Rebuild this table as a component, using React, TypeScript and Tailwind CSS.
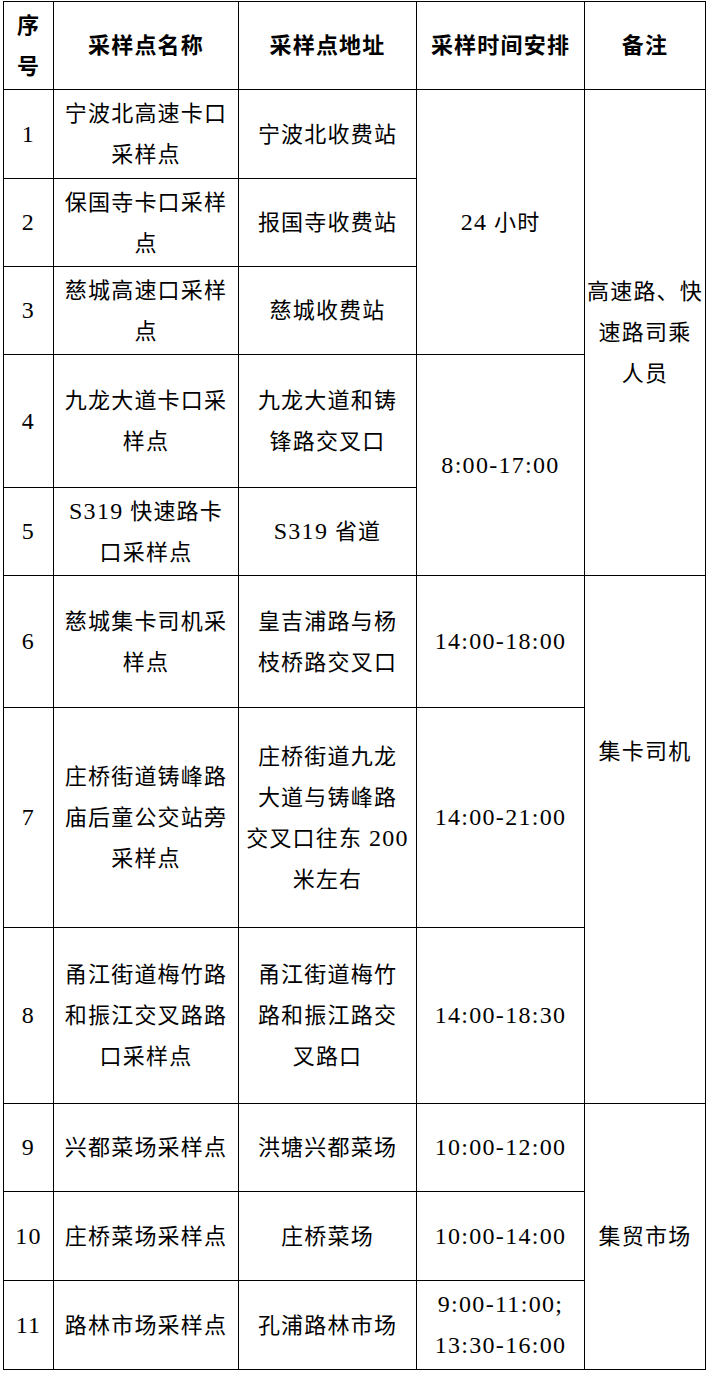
import React from "react";

type Cell = { lines: string[]; rowSpan?: number; top?: string };
type Row = { h: string; cells: Cell[] };

const rows: Row[] = [
  {
    h: "h-[89px]",
    cells: [
      { lines: ["1"] },
      { lines: ["宁波北高速卡口", "采样点"] },
      { lines: ["宁波北收费站"] },
      { lines: ["24 小时"], rowSpan: 3 },
      { lines: ["高速路、快", "速路司乘", "人员"], rowSpan: 5 },
    ],
  },
  {
    h: "h-[88px]",
    cells: [
      { lines: ["2"] },
      { lines: ["保国寺卡口采样", "点"] },
      { lines: ["报国寺收费站"] },
    ],
  },
  {
    h: "h-[88px]",
    cells: [
      { lines: ["3"] },
      { lines: ["慈城高速口采样", "点"] },
      { lines: ["慈城收费站"] },
    ],
  },
  {
    h: "h-[133px]",
    cells: [
      { lines: ["4"] },
      { lines: ["九龙大道卡口采", "样点"] },
      { lines: ["九龙大道和铸", "锋路交叉口"] },
      { lines: ["8:00-17:00"], rowSpan: 2 },
    ],
  },
  {
    h: "h-[88px]",
    cells: [
      { lines: ["5"] },
      { lines: ["S319 快速路卡", "口采样点"] },
      { lines: ["S319 省道"] },
    ],
  },
  {
    h: "h-[132px]",
    cells: [
      { lines: ["6"] },
      { lines: ["慈城集卡司机采", "样点"] },
      { lines: ["皇吉浦路与杨", "枝桥路交叉口"] },
      { lines: ["14:00-18:00"] },
      // text sits level with rows 6-7 in the original, not the middle of the merge
      { lines: ["集卡司机"], rowSpan: 3, top: "align-top pt-[155px]" },
    ],
  },
  {
    h: "h-[220px]",
    cells: [
      { lines: ["7"] },
      { lines: ["庄桥街道铸峰路", "庙后童公交站旁", "采样点"] },
      { lines: ["庄桥街道九龙", "大道与铸峰路", "交叉口往东 200", "米左右"] },
      { lines: ["14:00-21:00"] },
    ],
  },
  {
    h: "h-[176px]",
    cells: [
      { lines: ["8"] },
      { lines: ["甬江街道梅竹路", "和振江交叉路路", "口采样点"] },
      { lines: ["甬江街道梅竹", "路和振江路交", "叉路口"] },
      { lines: ["14:00-18:30"] },
    ],
  },
  {
    h: "h-[88px]",
    cells: [
      { lines: ["9"] },
      { lines: ["兴都菜场采样点"] },
      { lines: ["洪塘兴都菜场"] },
      { lines: ["10:00-12:00"] },
      { lines: ["集贸市场"], rowSpan: 3 },
    ],
  },
  {
    h: "h-[89px]",
    cells: [
      { lines: ["10"] },
      { lines: ["庄桥菜场采样点"] },
      { lines: ["庄桥菜场"] },
      { lines: ["10:00-14:00"] },
    ],
  },
  {
    h: "h-[89px]",
    cells: [
      { lines: ["11"] },
      { lines: ["路林市场采样点"] },
      { lines: ["孔浦路林市场"] },
      { lines: ["9:00-11:00;", "13:30-16:00"] },
    ],
  },
];

const headers = [["序", "号"], ["采样点名称"], ["采样点地址"], ["采样时间安排"], ["备注"]];

// latin/digit runs get a slightly bigger, wider face like the original's
function Line({ text }: { text: string }) {
  const parts = text.split(/([0-9A-Za-z:;\-]+)/).filter((p) => p !== "");
  return (
    <div className="whitespace-nowrap">
      {parts.map((p, i) =>
        /^[0-9A-Za-z:;\-]+$/.test(p) ? (
          <span key={i} className="text-[24px] tracking-[1.3px]">
            {p}
          </span>
        ) : (
          <span key={i}>{p}</span>
        )
      )}
    </div>
  );
}

export default function App() {
  return (
    <div
      className="bg-white pl-[3px] pt-[1px] text-black"
      style={{ fontFamily: "'Liberation Serif', 'Noto Sans CJK SC', serif" }}
    >
      <table className="table-fixed border-collapse w-[702px] text-[22px] leading-[41px] tracking-[1.2px]">
        <colgroup>
          <col className="w-[50px]" />
          <col className="w-[185px]" />
          <col className="w-[178px]" />
          <col className="w-[168px]" />
          <col className="w-[121px]" />
        </colgroup>
        <thead>
          <tr className="h-[88px]">
            {headers.map((h, i) => (
              <th
                key={i}
                className="border border-black p-0 text-center align-middle font-bold"
              >
                {h.map((l, j) => (
                  <Line key={j} text={l} />
                ))}
              </th>
            ))}
          </tr>
        </thead>
        <tbody>
          {rows.map((row, ri) => (
            <tr key={ri} className={row.h}>
              {row.cells.map((c, ci) => (
                <td
                  key={ci}
                  rowSpan={c.rowSpan}
                  className={`border border-black p-0 text-center ${c.top ?? "align-middle"}`}
                >
                  {c.lines.map((l, j) => (
                    <Line key={j} text={l} />
                  ))}
                </td>
              ))}
            </tr>
          ))}
        </tbody>
      </table>
    </div>
  );
}
